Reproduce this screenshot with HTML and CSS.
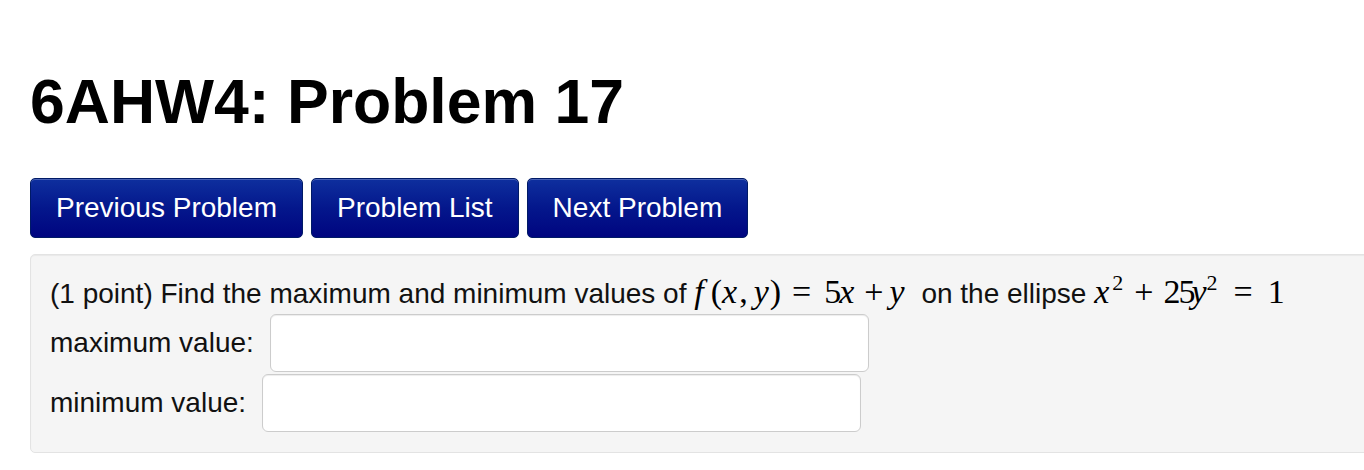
FILE: index.html
```html
<!DOCTYPE html>
<html>
<head>
<meta charset="utf-8">
<link rel="stylesheet" href="styles.css">
</head>
<body>
<div class="page">
  <h1 class="title">6AHW4: Problem 17</h1>
  <div class="nav">
    <a class="btn">Previous Problem</a>
    <a class="btn">Problem List</a>
    <a class="btn">Next Problem</a>
  </div>
  <div class="well">
    <p class="question">(1 point) Find the maximum and minimum values of <span class="math"><i class="mf">f</i><span>(</span><i class="mx1">x</i><span class="comma">,</span><i class="my1">y</i><span>)</span><span class="eq1">=</span><span>5</span><i class="mx2">x</i><span class="pl1">+</span><i class="my2">y</i></span> on the ellipse <span class="math"><i class="mx3">x</i><sup class="s1">2</sup><span class="pl2">+</span><span class="num">25</span><i class="my3">y</i><sup class="s2">2</sup><span class="eq2">=</span><span>1</span></span></p>
    <div class="row">
      <label class="label">maximum value:</label>
      <input class="field" type="text">
    </div>
    <div class="row">
      <label class="label">minimum value:</label>
      <input class="field" type="text">
    </div>
  </div>
</div>
</body>
</html>
```
FILE: styles.css
```css
html, body {
  margin: 0;
  padding: 0;
  background: #ffffff;
  overflow: hidden;
}
.page {
  padding-left: 30px;
  font-family: "Liberation Sans", Arial, sans-serif;
  color: #111;
}
.title {
  margin: 67px 0 0 0;
  font-size: 62.5px;
  line-height: 69px;
  font-weight: bold;
  color: #000;
}
.nav {
  display: flex;
  gap: 8px;
  margin-top: 42px;
}
.btn {
  display: flex;
  align-items: center;
  height: 58px;
  padding: 0 25px;
  border: 1px solid #001a66;
  border-radius: 5px;
  background: linear-gradient(to bottom, #0e2f9e 0%, #04178c 50%, #000580 100%);
  box-shadow: inset 0 1px 0 rgba(255,255,255,0.25);
  color: #ffffff;
  font-size: 28px;
  text-decoration: none;
}
.well {
  margin-top: 16px;
  margin-right: -20px;
  padding: 19px 20px 20px 19px;
  background: #f5f5f5;
  border: 1px solid #e3e3e3;
  border-radius: 5px;
  box-shadow: inset 0 1px 1px rgba(0,0,0,0.05);
}
.question {
  margin: 0;
  font-size: 28px;
  line-height: 40px;
  white-space: nowrap;
}
.math {
  font-family: "Liberation Serif", "Times New Roman", serif;
  font-size: 34px;
  line-height: 0;
  color: #000;
}
.math i {
  font-style: italic;
}
.mf { margin-right: 7px; }
.mx1 { margin-right: 2px; }
.comma { margin-right: 6px; }
.my1 { margin-right: 1px; }
.eq1 { margin: 0 13px 0 11px; }
.mx2 { margin: 0 3px 0 -2px; }
.pl1 { margin: 0 6px 0 7px; }
.my2 { margin-right: 9px; }
.mx3 { margin-right: 3px; }
.pl2 { margin: 0 10px 0 11px; }
.num { letter-spacing: -2px; }
.my3 { margin-left: -2px; }
.s2 { margin-left: 0; }
.eq2 { margin: 0 15px 0 16px; }
.math sup {
  font-size: 22px;
  line-height: 0;
  vertical-align: 13px;
}
.row {
  display: flex;
  align-items: center;
  gap: 16px;
  height: 58px;
  margin-bottom: 2px;
}
.row:last-child {
  margin-bottom: 0;
}
.label {
  font-size: 28px;
}
.field {
  box-sizing: border-box;
  width: 599px;
  height: 58px;
  margin: 0;
  border: 1px solid #cccccc;
  border-radius: 6px;
  background: #ffffff;
  box-shadow: inset 0 1px 1px rgba(0,0,0,0.075);
  font-size: 28px;
  padding: 4px 10px;
}
```
